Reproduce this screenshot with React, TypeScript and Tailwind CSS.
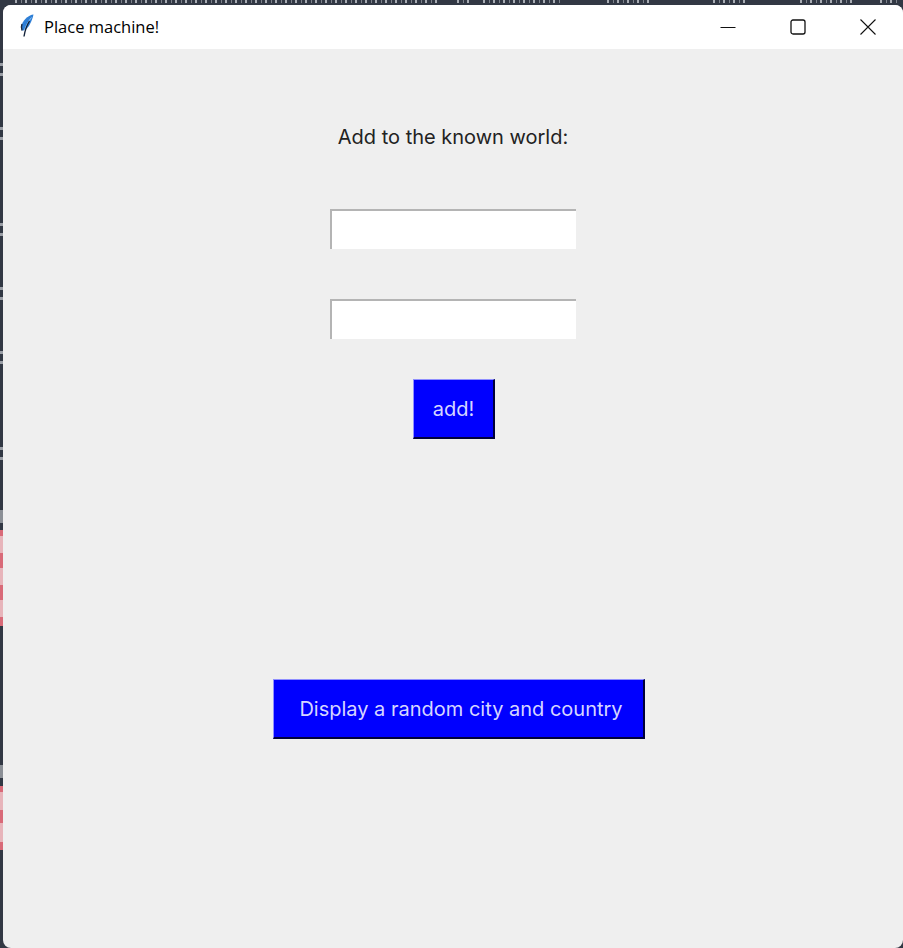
// marks on the left edge of the desktop behind the window: [top, height, colour]
const stripMarks: [number, number, string][] = [
  [63, 3, "bg-[#9a9ea6]"],
  [73, 3, "bg-[#9a9ea6]"],
  [127, 3, "bg-[#9a9ea6]"],
  [137, 3, "bg-[#9a9ea6]"],
  [223, 3, "bg-[#9a9ea6]"],
  [233, 3, "bg-[#9a9ea6]"],
  [287, 3, "bg-[#9a9ea6]"],
  [297, 3, "bg-[#9a9ea6]"],
  [351, 3, "bg-[#9a9ea6]"],
  [361, 3, "bg-[#9a9ea6]"],
  [447, 3, "bg-[#9a9ea6]"],
  [457, 3, "bg-[#9a9ea6]"],
  [510, 13, "bg-[#8b8f96]"],
  [530, 6, "bg-[#d96a78]"],
  [536, 17, "bg-[#e7b4ba]"],
  [553, 15, "bg-[#d96a78]"],
  [568, 17, "bg-[#e7b4ba]"],
  [585, 15, "bg-[#d96a78]"],
  [600, 17, "bg-[#e7b4ba]"],
  [617, 9, "bg-[#d96a78]"],
  [765, 13, "bg-[#8b8f96]"],
  [786, 6, "bg-[#d96a78]"],
  [792, 18, "bg-[#e7b4ba]"],
  [810, 13, "bg-[#d96a78]"],
  [823, 19, "bg-[#e7b4ba]"],
  [842, 8, "bg-[#d96a78]"],
];

// light bits of the terminal text showing above the title bar: [gap before, width]
const topRuns: [number, number][] = [
  [15, 425],
  [17, 13],
  [13, 77],
  [47, 46],
  [60, 34],
  [53, 53],
  [27, 20],
];

function LeftStrip() {
  let y = 5;
  const parts: { h: number; c: string }[] = [];
  for (const [top, h, c] of stripMarks) {
    parts.push({ h: top - y, c: "" });
    parts.push({ h, c });
    y = top + h;
  }
  return (
    <div className="flex w-[3px] flex-col">
      {parts.map((s, i) => (
        <div key={i} className={s.c} style={{ height: s.h }} />
      ))}
    </div>
  );
}

function TopStrip() {
  return (
    <div className="flex h-[5px] items-start">
      {topRuns.map(([gap, w], i) => (
        <div
          key={i}
          className="h-[3px] bg-[repeating-linear-gradient(90deg,#a9adb4_0px,#a9adb4_2px,transparent_2px,transparent_6px,#7d828b_6px,#7d828b_7px,transparent_7px,transparent_10px)]"
          style={{ marginLeft: gap, width: w }}
        />
      ))}
    </div>
  );
}

function Feather() {
  return (
    <svg width="16" height="24" viewBox="0 0 16 24">
      <path d="M14.500 0.500C10 1 5 5 3 10c-.8 2.300-.8 4.500 0 6.500 3 .2 6-2.500 8-6.500 1.500-3 3-6.500 3.500-9.500z" fill="#2f7fd6" />
      <path d="M12.500 3.500C9.500 7 7 11.500 5.500 16" fill="none" stroke="#8fc2f0" strokeWidth="1" />
      <path d="M10.500 7C8 11 6 16 5 22.500" fill="none" stroke="#14233a" strokeWidth="1.400" />
      <path d="M3 10c-.8 2.300-.8 4.500 0 6.500" fill="none" stroke="#1c2b42" strokeWidth="1.400" />
    </svg>
  );
}

function TitleBar() {
  return (
    <div className="flex h-11 items-center bg-white">
      <div className="mb-[3px] ml-4 flex w-[25px] items-center">
        <Feather />
      </div>
      <span className="text-[16.5px] text-black [font-family:'Open_Sans',sans-serif]">Place machine!</span>
      <div className="ml-auto flex h-full items-center">
        <div className="flex w-[70px] items-center justify-center">
          <svg width="16" height="16" viewBox="0 0 16 16">
            <path d="M0.500 8.500H15.500" stroke="#111" strokeWidth="1" />
          </svg>
        </div>
        <div className="flex w-[70px] items-center justify-center">
          <svg width="16" height="16" viewBox="0 0 16 16">
            <rect x="1" y="1" width="14" height="14" rx="2" fill="none" stroke="#111" strokeWidth="1.300" />
          </svg>
        </div>
        <div className="flex w-[70px] items-center justify-center">
          <svg width="16" height="16" viewBox="0 0 16 16">
            <path d="M0.500 0.500L15.500 15.500M15.500 0.500L0.500 15.500" stroke="#111" strokeWidth="1.100" />
          </svg>
        </div>
      </div>
    </div>
  );
}

function Field({ className }: { className: string }) {
  return (
    <input
      className={`h-10 w-[246px] border-t-2 border-l-2 border-t-[#b4b4b4] border-l-[#b4b4b4] bg-white outline-none ${className}`}
    />
  );
}

function BlueButton({ children, className }: { children: string; className: string }) {
  return (
    <button
      className={`h-[60px] border border-r-2 border-b-2 border-t-[#8f8fff] border-r-[#00003c] border-b-[#00003c] border-l-[#8f8fff] bg-[#0000ff] text-[20px] text-[#d6d6ff] [font-family:Inter,sans-serif] ${className}`}
    >
      {children}
    </button>
  );
}

export default function App() {
  return (
    <div className="flex h-[948px] w-[903px] flex-col overflow-hidden bg-[#323844]">
      <TopStrip />
      <div className="flex flex-1">
        <LeftStrip />
        <div className="flex flex-1 flex-col overflow-hidden rounded-lg bg-[#efefef]">
          <TitleBar />
          <div className="flex flex-col items-center">
            <p className="mt-[74px] text-[20px] leading-7 text-[#222] [font-family:Inter,sans-serif]">
              Add to the known world:
            </p>
            <Field className="mt-[58px]" />
            <Field className="mt-[50px]" />
            <BlueButton className="mt-10 ml-[2px] w-[82px]">add!</BlueButton>
            <BlueButton className="mt-[240px] ml-[12px] w-[372px] pl-[5px]">
              Display a random city and country
            </BlueButton>
          </div>
        </div>
      </div>
    </div>
  );
}
